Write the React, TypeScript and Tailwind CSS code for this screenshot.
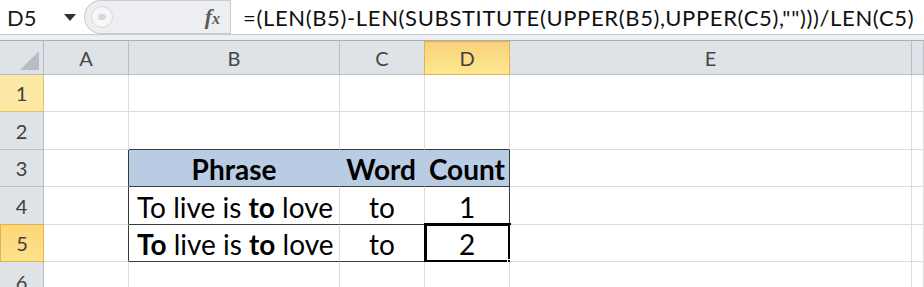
import React from "react";

const COLS = ["A", "B", "C", "D", "E", ""];
const ROW_H = [37, 38, 37, 38, 37, 40];
const DARK = "dark";
const GRID = "grid";

function FxIcon() {
  return (
    <span
      className="text-[22px] font-bold italic text-[#5a5a5a] leading-none"
      style={{ fontFamily: '"Liberation Serif", "DejaVu Serif", serif' }}
    >
      f<span className="text-[16px]">x</span>
    </span>
  );
}

type CellDef = { content?: React.ReactNode; bold?: boolean; align?: string; bg?: string };

function cellContent(r: number, c: number): CellDef {
  if (r === 3) {
    if (c === 1) return { content: "Phrase", bold: true, align: "justify-center", bg: "bg-[#b8cce4]" };
    if (c === 2) return { content: "Word", bold: true, align: "justify-end pr-[8px]", bg: "bg-[#b8cce4]" };
    if (c === 3) return { content: "Count", bold: true, align: "justify-end pr-[4px]", bg: "bg-[#b8cce4]" };
  }
  if (r === 4 || r === 5) {
    if (c === 1)
      return {
        content: (
          <>
            {r === 5 ? <b>To</b> : "To"}&nbsp;live is <b>to</b> love
          </>
        ),
        align: "justify-start pl-[8px]",
      };
    if (c === 2) return { content: "to", align: "justify-center" };
    if (c === 3) return { content: r === 4 ? "1" : "2", align: "justify-center" };
  }
  return {};
}

export default function App() {
  const font = { fontFamily: 'Lato, "Open Sans", "Liberation Sans", sans-serif' };
  return (
    <div className="w-[924px] h-[287px] overflow-hidden bg-white text-[#000]" style={font}>
      {/* formula bar */}
      <div className="flex h-[35px] items-stretch bg-white border-b border-[#c6c9ce]">
        <div className="w-[56px] flex items-center pl-[7px] text-[22px] text-[#1a1a1a]">D5</div>
        <div className="w-[28px] flex items-center justify-center">
          <div className="w-0 h-0 border-l-[6px] border-r-[6px] border-t-[7px] border-l-transparent border-r-transparent border-t-[#333]" />
        </div>
        <div className="w-[146px] flex items-center bg-[#eceef1] rounded-l-full border-y border-l border-[#c9ccd1]">
          <div className="ml-[6px] w-[22px] h-[22px] rounded-full bg-[#f6f6f7] border border-[#d6d8dc] flex items-center justify-center">
            <div className="w-[8px] h-[6px] rounded-full bg-[#d6d8dc]" />
          </div>
          <div className="flex-1" />
          <div className="pr-[10px] pt-[2px]">
            <FxIcon />
          </div>
        </div>
        <div className="flex-1 flex items-center pl-[12px] border-l border-[#c9ccd1] text-[22px] tracking-[0.65px] text-[#111] whitespace-nowrap overflow-hidden">
          =(LEN(B5)-LEN(SUBSTITUTE(UPPER(B5),UPPER(C5),"")))/LEN(C5)
        </div>
      </div>
      {/* gap band */}
      <div className="h-[6px] bg-[#eef0f3] border-b border-[#a9afb6]" />
      {/* sheet grid */}
      <div
        className="grid"
        style={{
          gridTemplateColumns: "44px 85px 211px 85px 85px 402px 1fr",
          gridTemplateRows: `34px ${ROW_H.map((h) => h + "px").join(" ")}`,
        }}
      >
        {/* corner */}
        <div className="bg-[#dfe3e8] border-r border-b border-[#b5bac1] relative">
          <div className="absolute right-[4px] bottom-[4px] w-0 h-0 border-b-[19px] border-l-[19px] border-b-[#b9bdc3] border-l-transparent" />
        </div>
        {COLS.map((c, i) =>
          c === "D" ? (
            <div
              key={"h" + i}
              className="flex items-center justify-center text-[20px] text-[#404040] bg-gradient-to-b from-[#f9d07a] to-[#fde990] border border-[#e8b24a] -ml-px"
            >
              {c}
            </div>
          ) : (
            <div
              key={"h" + i}
              className="flex items-center justify-center text-[20px] text-[#454545] bg-[#dfe3e8] border-r border-b border-[#b9bec5]"
            >
              {c}
            </div>
          )
        )}
        {ROW_H.map((_, ri) => {
          const r = ri + 1;
          const headerCls =
            r === 5
              ? "bg-gradient-to-b from-[#fcd77a] to-[#fde28c] border border-[#e8b24a] -mt-px"
              : r === 1
              ? "bg-[#fce9a6] border-r border-b border-[#e8c063]"
              : "bg-[#dfe3e8] border-r border-b border-[#b9bec5]";
          return (
            <React.Fragment key={"r" + r}>
              <div className={`flex items-center justify-center text-[20px] text-[#404040] ${headerCls}`}>{r}</div>
              {COLS.map((_, c) => {
                const def = cellContent(r, c);
                const inTable = r >= 3 && r <= 5 && c >= 1 && c <= 3;
                let bottom = GRID;
                let right = GRID;
                if ((r === 2 || inTable) && c >= 1 && c <= 3) bottom = DARK;
                if (r >= 3 && r <= 5 && (c === 0 || c === 3)) right = DARK;
                if (r === 3 && (c === 1 || c === 2)) right = "fill";
                const isSel = r === 5 && c === 3;
                return (
                  <div
                    key={c}
                    className={`relative flex items-center text-[28px] leading-none whitespace-nowrap border-solid ${
                      def.bg ?? "bg-white"
                    } ${def.align ?? ""} ${def.bold ? "font-bold" : ""}`}
                    style={{
                      borderRightColor: right === DARK ? "#3a3a3a" : right === GRID ? "#dadcdd" : "#b8cce4",
                      borderBottomColor: bottom === DARK ? "#3a3a3a" : "#dadcdd",
                      borderRightWidth: right === DARK ? 1.5 : 1,
                      borderBottomWidth: bottom === DARK ? 1.5 : 1,
                    }}
                  >
                    <span className="pt-[2px]">{def.content}</span>
                    {isSel && (
                      <>
                        <div className="absolute -left-[1px] -top-[2px] -right-[2px] -bottom-[2px] border-[3px] border-black pointer-events-none" />
                        <div className="absolute -right-[5px] -bottom-[5px] w-[7px] h-[7px] bg-black border border-white" />
                      </>
                    )}
                  </div>
                );
              })}
            </React.Fragment>
          );
        })}
      </div>
    </div>
  );
}
